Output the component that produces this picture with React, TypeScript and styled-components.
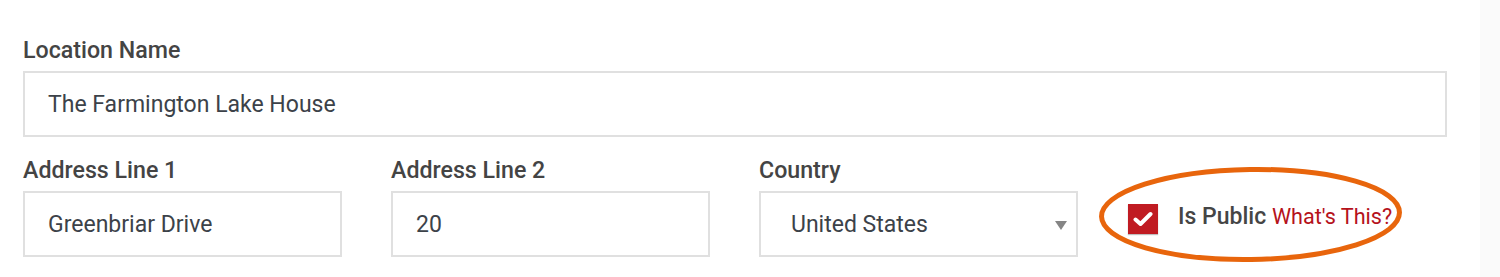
import styled, { createGlobalStyle } from 'styled-components'

const GlobalStyle = createGlobalStyle`
  html, body {
    margin: 0;
    padding: 0;
    background: #ffffff;
    font-family: Roboto, "Liberation Sans", Arial, sans-serif;
  }
`

const Page = styled.div`
  display: flex;
  width: 1500px;
  height: 277px;
  overflow: hidden;
`

const Main = styled.div`
  width: 1480px;
  padding: 37px 33px 0 23px;
  box-sizing: border-box;
  display: flex;
  flex-direction: column;
  gap: 20px;
`

const SideStrip = styled.div`
  width: 20px;
  background: #fafafa;
`

const Field = styled.div<{ $width?: number }>`
  display: flex;
  flex-direction: column;
  gap: 7px;
  width: ${(p) => (p.$width ? `${p.$width}px` : '100%')};
`

const Label = styled.label`
  font-size: 23.2px;
  line-height: 27px;
  font-weight: 500;
  color: #444444;
`

const Input = styled.div<{ $indent?: number }>`
  height: 66px;
  box-sizing: border-box;
  border: 2px solid #e0e0e0;
  display: flex;
  align-items: center;
  padding-left: ${(p) => p.$indent ?? 23}px;
  font-size: 23px;
  color: #3c4249;
  position: relative;
`

const Row = styled.div`
  display: flex;
  gap: 49px;
  align-items: flex-end;
`

const Arrow = styled.span`
  position: absolute;
  right: 9px;
  top: 28px;
  width: 0;
  height: 0;
  border-left: 6.5px solid transparent;
  border-right: 6.5px solid transparent;
  border-top: 9px solid #858585;
`

const PublicWrap = styled.div`
  position: relative;
  height: 66px;
  display: flex;
  align-items: center;
  gap: 20px;
  padding-left: 1px;
  margin-bottom: 5px;
`

const CheckBox = styled.span`
  width: 30px;
  height: 30px;
  background: #c01b22;
  display: flex;
  align-items: center;
  justify-content: center;
  box-shadow: 0 1px 1px rgba(0, 0, 0, 0.25);
`

const PublicText = styled.span`
  font-size: 23px;
  font-weight: 500;
  color: #454545;
  margin-top: -5px;
`

const WhatsThis = styled.a`
  font-weight: 400;
  color: #b5121b;
  font-size: 21.6px;
  text-decoration: none;
`

const Ring = styled.svg`
  position: absolute;
  left: -28px;
  top: -28px;
  pointer-events: none;
`

export default function App() {
  return (
    <>
      <GlobalStyle />
      <Page>
        <Main>
          <Field>
            <Label>Location Name</Label>
            <Input>The Farmington Lake House</Input>
          </Field>
          <Row>
            <Field $width={319}>
              <Label>Address Line 1</Label>
              <Input>Greenbriar Drive</Input>
            </Field>
            <Field $width={319}>
              <Label>Address Line 2</Label>
              <Input>20</Input>
            </Field>
            <Field $width={319}>
              <Label>Country</Label>
              <Input $indent={30}>
                United States
                <Arrow />
              </Input>
            </Field>
            <PublicWrap>
              <CheckBox>
                <svg width="20" height="16" viewBox="0 0 20 16">
                  <path
                    d="M2.5 8.5 L7.5 13 L17.5 3"
                    fill="none"
                    stroke="#ffffff"
                    strokeWidth="4"
                    strokeLinecap="round"
                    strokeLinejoin="round"
                  />
                </svg>
              </CheckBox>
              <PublicText>
                Is Public <WhatsThis href="#">What's This?</WhatsThis>
              </PublicText>
              <Ring width="310" height="112" viewBox="0 0 310 112">
                <ellipse
                  cx="151.5"
                  cy="56.5"
                  rx="149"
                  ry="45"
                  fill="none"
                  stroke="#e8650c"
                  strokeWidth="5"
                  transform="rotate(-0.8 151.5 56.5)"
                />
              </Ring>
            </PublicWrap>
          </Row>
        </Main>
        <SideStrip />
      </Page>
    </>
  )
}
